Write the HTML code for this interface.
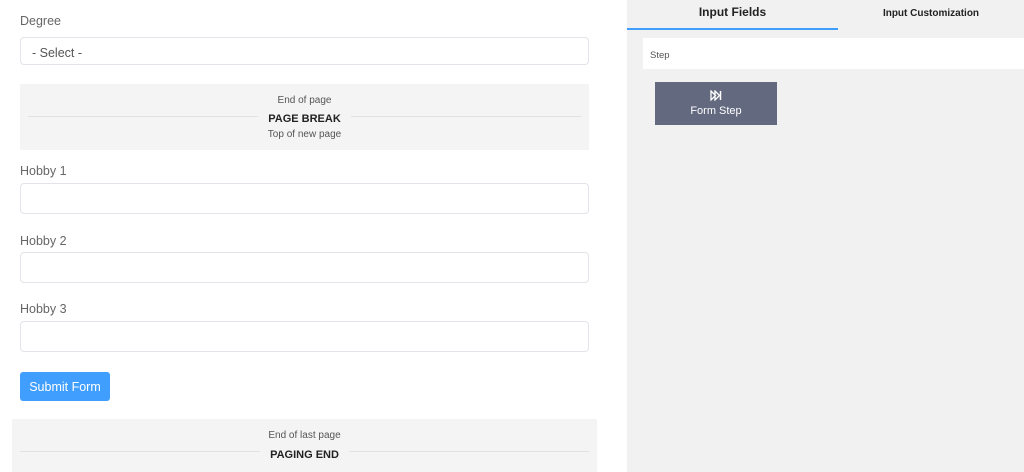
<!DOCTYPE html>
<html><head><meta charset="utf-8"><style>
*{box-sizing:border-box;margin:0;padding:0}
body{width:1024px;height:472px;overflow:hidden;background:#fff;font-family:"Liberation Sans",sans-serif;position:relative}
.a{position:absolute}
.lbl{font-size:12.5px;color:#666}
.inp{position:absolute;left:20px;width:569px;border:1px solid #e2e4ea;border-radius:4px;background:#fff}
.pb{position:absolute;background:#f4f4f4;text-align:center;color:#555}
.line{position:absolute;height:1px;background:#e2e2e2}
</style></head><body>
<div class="a lbl" style="left:20px;top:14px">Degree</div>
<div class="inp" style="top:37px;height:28px;font-size:12.5px;color:#555;padding:8px 0 0 11px">- Select -</div>
<div class="pb" style="left:20px;top:84px;width:569px;height:66px">
 <div class="line" style="left:8px;right:8px;top:32px"></div>
 <div class="a" style="left:0;right:0;top:11px;font-size:10px">End of page</div>
 <div class="a" style="left:0;right:0;top:25px;text-align:center"><span style="background:#f4f4f4;padding:0 10px;font-size:11px;font-weight:bold;color:#222">PAGE BREAK</span></div>
 <div class="a" style="left:0;right:0;top:45px;font-size:10px">Top of new page</div>
</div>
<div class="a lbl" style="left:20px;top:164px">Hobby 1</div>
<div class="inp" style="top:183px;height:31px"></div>
<div class="a lbl" style="left:20px;top:234px">Hobby 2</div>
<div class="inp" style="top:252px;height:31px"></div>
<div class="a lbl" style="left:20px;top:302px">Hobby 3</div>
<div class="inp" style="top:321px;height:31px"></div>
<div class="a" style="left:20px;top:372px;width:90px;height:29px;background:#409eff;border-radius:3px;color:#fff;font-size:12.5px;text-align:center;line-height:31px">Submit Form</div>
<div class="pb" style="left:12px;top:419px;width:585px;height:53px">
 <div class="line" style="left:8px;right:8px;top:32px"></div>
 <div class="a" style="left:0;right:0;top:11px;font-size:10px">End of last page</div>
 <div class="a" style="left:0;right:0;top:26px;text-align:center"><span style="background:#f4f4f4;padding:0 10px;font-size:11px;font-weight:bold;color:#222">PAGING END</span></div>
</div>
<div class="a" style="left:627px;top:0;width:397px;height:472px;background:#f1f1f1">
 <div class="a" style="left:0;top:0;width:211px;height:30px;border-bottom:2px solid #409eff;text-align:center;line-height:24px;font-size:12px;font-weight:bold;color:#222">Input Fields</div>
 <div class="a" style="left:211px;top:0;width:186px;height:30px;text-align:center;line-height:27px;font-size:10px;font-weight:bold;color:#222">Input Customization</div>
 <div class="a" style="left:16px;top:38px;width:381px;height:31px;background:#fff;font-size:9.5px;color:#555;padding:12px 0 0 7px">Step</div>
 <div class="a" style="left:28px;top:82px;width:122px;height:43px;background:#636a80;color:#fff;text-align:center">
  <svg class="a" style="left:55px;top:8px" width="12" height="11" viewBox="0 0 12 11"><path d="M1 1l4.5 4.5L1 10zM5 1l4.5 4.5L5 10z" fill="none" stroke="#fff" stroke-width="1.3"/><path d="M10.5 1v9" stroke="#fff" stroke-width="1.5"/></svg>
  <div class="a" style="left:0;right:0;top:23px;font-size:11px">Form Step</div>
 </div>
</div>
</body></html>
